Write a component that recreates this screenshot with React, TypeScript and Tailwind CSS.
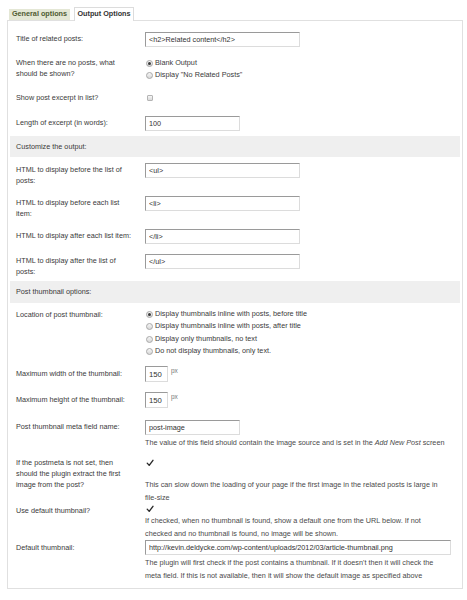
import React from "react";

const LABEL = "w-[135px] shrink-0 pl-[6px] leading-[11px] text-[#3a3a3a]";
const INPUT =
  "block h-[15px] border border-t-[#9a9a9a] border-l-[#9a9a9a] border-r-[#dcdcdc] border-b-[#dcdcdc] bg-white px-[3px] text-[7.25px] leading-[13px] text-[#333] outline-none";

function TextBox({ value, w }: { value: string; w: string }) {
  return <input readOnly value={value} className={`${INPUT} ${w}`} />;
}

function Radio({ checked, children }: { checked?: boolean; children: React.ReactNode }) {
  return (
    <div className="flex h-[12.5px] items-center whitespace-nowrap">
      <span className="ml-[1px] flex h-[7px] w-[7px] items-center justify-center rounded-full border border-[#a8a8a8] bg-linear-to-b from-[#f6f6f6] to-[#d8d8d8]">
        {checked && <span className="h-[3px] w-[3px] rounded-full bg-[#3a3a3a]" />}
      </span>
      <span className="ml-[2px] text-[#3a3a3a]">{children}</span>
    </div>
  );
}

function Check() {
  return (
    <div className="flex h-[11px] items-center">
      <svg width="8" height="8" viewBox="0 0 10 10" className="ml-[1px] block">
        <path d="M1.5 5.2 L4 8 L8.7 1.6" fill="none" stroke="#2a2a2a" strokeWidth="1.7" strokeLinecap="round" strokeLinejoin="round" />
      </svg>
    </div>
  );
}

function Header({ children, cls }: { children: React.ReactNode; cls: string }) {
  return <div className={`bg-[#efefef] pl-[6px] text-[#3a3a3a] ${cls}`}>{children}</div>;
}

export default function App() {
  return (
    <div className="min-h-[600px] w-[467px] bg-white pl-[7px] pt-[7px] font-['Liberation_Sans',Arial,sans-serif] text-[7.25px]">
      {/* tabs */}
      <div className="flex h-[13px] items-end gap-[4px] pl-[2px]">
        <div className="flex h-[11px] w-[61px] items-center justify-center bg-[#e4e7d5] font-bold text-[#4e5b31]">
          General options
        </div>
        <div className="relative z-10 -mb-px flex h-[14px] w-[60px] items-center justify-center border border-b-0 border-[#dcdcdc] bg-white pb-[1px] font-bold text-[#333]">
          Output Options
        </div>
      </div>

      {/* box */}
      <div className="w-[456px] border border-[#e0e0e0] px-[2px] pb-[6px]">
        {/* Title */}
        <div className="mt-[11px] flex">
          <div className={`${LABEL} pt-[1px]`}>Title of related posts:</div>
          <TextBox value="<h2>Related content</h2>" w="w-[155px]" />
        </div>

        {/* When no posts */}
        <div className="mt-[10px] flex">
          <div className={LABEL}>
            When there are no posts, what
            <br />
            should be shown?
          </div>
          <div>
            <Radio checked>Blank Output</Radio>
            <Radio>Display "No Related Posts"</Radio>
          </div>
        </div>

        {/* Show excerpt */}
        <div className="mt-[10px] flex">
          <div className={LABEL}>Show post excerpt in list?</div>
          <div className="flex h-[11px] items-center">
            <span className="ml-[2px] block h-[6px] w-[6px] rounded-[1px] border border-[#b4b4b4] bg-linear-to-b from-[#f6f6f6] to-[#dadada]" />
          </div>
        </div>

        {/* Length */}
        <div className="mt-[13px] flex">
          <div className={`${LABEL} pt-[1px]`}>Length of excerpt (in words):</div>
          <TextBox value="100" w="w-[95px]" />
        </div>

        <Header cls="mt-[5px] h-[21px] leading-[21px]">Customize the output:</Header>

        <div className="mt-[6px] flex">
          <div className={`${LABEL} pt-[1px]`}>
            HTML to display before the list of
            <br />
            posts:
          </div>
          <TextBox value="<ul>" w="w-[155px]" />
        </div>

        <div className="mt-[10px] flex">
          <div className={`${LABEL} pt-[1px]`}>
            HTML to display before each list
            <br />
            item:
          </div>
          <TextBox value="<li>" w="w-[155px]" />
        </div>

        <div className="mt-[10px] flex">
          <div className={`${LABEL} pt-[1px]`}>HTML to display after each list item:</div>
          <TextBox value="</li>" w="w-[155px]" />
        </div>

        <div className="mt-[10px] flex">
          <div className={`${LABEL} pt-[1px]`}>
            HTML to display after the list of
            <br />
            posts:
          </div>
          <TextBox value="</ul>" w="w-[155px]" />
        </div>

        <Header cls="mt-[4px] h-[22px] leading-[22px]">Post thumbnail options:</Header>

        <div className="mt-[5px] flex">
          <div className={`${LABEL} pt-[1px]`}>Location of post thumbnail:</div>
          <div>
            <Radio checked>Display thumbnails inline with posts, before title</Radio>
            <Radio>Display thumbnails inline with posts, after title</Radio>
            <Radio>Display only thumbnails, no text</Radio>
            <Radio>Do not display thumbnails, only text.</Radio>
          </div>
        </div>

        <div className="mt-[8px] flex">
          <div className={`${LABEL} pt-[2px]`}>Maximum width of the thumbnail:</div>
          <div className="flex items-start">
            <input readOnly value="150" className={`${INPUT} !h-[16px] w-[23px] !text-[7.75px]`} />
            <span className="ml-[3px] text-[6.5px] leading-[9px] text-[#777]">px</span>
          </div>
        </div>

        <div className="mt-[10px] flex">
          <div className={`${LABEL} pt-[2px]`}>Maximum height of the thumbnail:</div>
          <div className="flex items-start">
            <input readOnly value="150" className={`${INPUT} !h-[16px] w-[23px] !text-[7.75px]`} />
            <span className="ml-[3px] text-[6.5px] leading-[9px] text-[#777]">px</span>
          </div>
        </div>

        <div className="mt-[12px] flex">
          <div className={`${LABEL} pt-[1px]`}>Post thumbnail meta field name:</div>
          <div>
            <TextBox value="post-image" w="w-[95px]" />
            <div className="mt-[1px] whitespace-nowrap leading-[13px] text-[#4a4a4a]">
              The value of this field should contain the image source and is set in the <i>Add New Post</i> screen
            </div>
          </div>
        </div>

        <div className="mt-[8px] flex">
          <div className={LABEL}>
            If the postmeta is not set, then
            <br />
            should the plugin extract the first
            <br />
            image from the post?
          </div>
          <div>
            <Check />
            <div className="mt-[10px] whitespace-nowrap leading-[13px] text-[#4a4a4a]">
              This can slow down the loading of your page if the first image in the related posts is large in
              <br />
              file-size
            </div>
          </div>
        </div>

        <div className="mt-[-1px] flex">
          <div className={`${LABEL} pt-[1.5px]`}>Use default thumbnail?</div>
          <div>
            <Check />
            <div className="whitespace-nowrap leading-[13px] text-[#4a4a4a]">
              If checked, when no thumbnail is found, show a default one from the URL below. If not
              <br />
              checked and no thumbnail is found, no image will be shown.
            </div>
          </div>
        </div>

        <div className="mt-[0px] flex">
          <div className={`${LABEL} pt-[1.5px]`}>Default thumbnail:</div>
          <div>
            <TextBox value="http://kevin.deldycke.com/wp-content/uploads/2012/03/article-thumbnail.png" w="w-[306px]" />
            <div className="mt-[1px] whitespace-nowrap leading-[13px] text-[#4a4a4a]">
              The plugin will first check if the post contains a thumbnail. If it doesn't then it will check the
              <br />
              meta field. If this is not available, then it will show the default image as specified above
            </div>
          </div>
        </div>
      </div>
    </div>
  );
}
